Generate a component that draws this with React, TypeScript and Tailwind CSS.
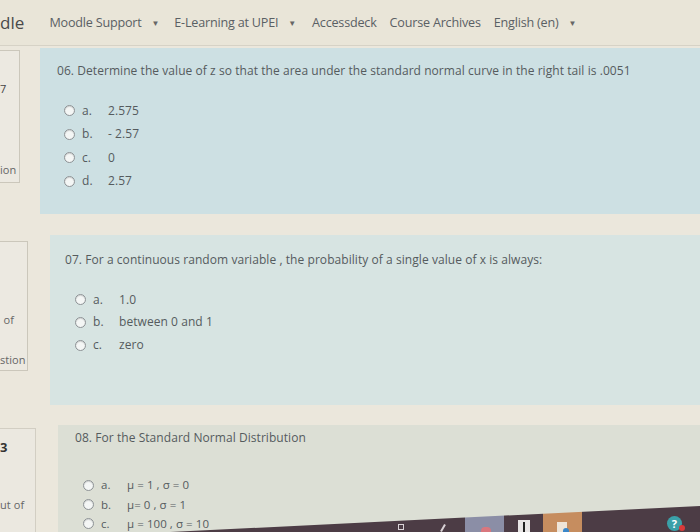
import type { ReactNode } from 'react'

const font = { fontFamily: '"Open Sans", "Noto Sans", Arial, sans-serif' }

function Caret({ className = 'ml-[10px]' }: { className?: string }) {
  return <span className={`inline-block text-[8px] leading-none text-[#666] ${className}`}>▼</span>
}

function Radio() {
  return (
    <span className="inline-block h-[11px] w-[11px] shrink-0 rounded-full border border-[#8d9295] bg-[#f4f6f5] shadow-[inset_0_1px_1px_rgba(0,0,0,0.15)]" />
  )
}

interface OptionProps {
  letter: string
  children: ReactNode
  rowClass: string
}

function Option({ letter, children, rowClass }: OptionProps) {
  return (
    <div className={`flex items-center ${rowClass}`}>
      <Radio />
      <span className="ml-[7px] w-[26px]">{letter}</span>
      <span>{children}</span>
    </div>
  )
}

export default function App() {
  return (
    <div
      style={font}
      className="relative h-[532px] w-[700px] overflow-hidden bg-[#ebe7dc] text-[12px] tracking-[0.06px] text-[#555b5e]"
    >
      {/* top navigation */}
      <div className="flex h-[46px] items-center border-b border-[#d6d2c6] bg-[#e9e5d8] pt-[1px]">
        <span className="text-[17px] text-[#4a4a4a]">dle</span>
        <div className="ml-[25px] flex items-center text-[12.6px] tracking-[-0.2px] text-[#5a6064]">
          <span>Moodle Support</span>
          <Caret />
          <span className="ml-[15px]">E-Learning at UPEI</span>
          <Caret />
          <span className="ml-[16px]">Accessdeck</span>
          <span className="ml-[13px]">Course Archives</span>
          <span className="ml-[13px]">English (en)</span>
          <Caret />
        </div>
      </div>

      {/* question 06 */}
      <div className="mt-[2px] flex items-start">
        <div className="mt-[2px] flex h-[133px] w-[20px] flex-col border-y border-r border-[#cbc7bb] bg-[#ece9e1] text-[11px] text-[#666]">
          <div className="mt-[30px] pr-[14px] text-right text-[#444]">7</div>
          <div className="mt-[64px] pr-[5px] text-right">ion</div>
        </div>
        <div className="ml-[20px] h-[166px] flex-1 bg-[#cde0e3] pl-[17px] pt-[14px]">
          <div>06. Determine the value of z so that the area under the standard normal curve in the right tail is .0051</div>
          <div className="ml-[7px] mt-[19px]">
            <Option letter="a." rowClass="h-[23.5px]">2.575</Option>
            <Option letter="b." rowClass="h-[23.5px]">- 2.57</Option>
            <Option letter="c." rowClass="h-[23.5px]">0</Option>
            <Option letter="d." rowClass="h-[23.5px]">2.57</Option>
          </div>
        </div>
      </div>

      {/* question 07 */}
      <div className="mt-[21px] flex items-start">
        <div className="mt-[6px] flex h-[130px] w-[28px] flex-col border-y border-r border-[#cbc7bb] bg-[#ece9e1] text-[11px] text-[#666]">
          <div className="mt-[70px] pr-[13px] text-right">of</div>
          <div className="mt-[23px] pr-[2px] text-right">stion</div>
        </div>
        <div className="ml-[22px] h-[170px] flex-1 bg-[#d7e4e2] pl-[15px] pt-[16px]">
          <div>07. For a continuous random variable , the probability of a single value of x is always:</div>
          <div className="ml-[10px] mt-[20px]">
            <Option letter="a." rowClass="h-[21.5px]">1.0</Option>
            <Option letter="b." rowClass="h-[23px]">between 0 and 1</Option>
            <Option letter="c." rowClass="h-[23px]">zero</Option>
          </div>
        </div>
      </div>

      {/* question 08 */}
      <div className="mt-[20px] flex items-start">
        <div className="mt-[3px] flex h-[120px] w-[36px] flex-col border-t border-r border-[#d2cec3] bg-[#ebe8e0] text-[11px] text-[#666]">
          <div className="mt-[9px] text-[13px] font-bold text-[#333]">3</div>
          <div className="mt-[39px]">ut of</div>
        </div>
        <div className="ml-[22px] h-[120px] flex-1 bg-[#dcdfd5] pl-[17px] pt-[4px]">
          <div>08. For the Standard Normal Distribution</div>
          <div className="ml-[8px] mt-[28px] text-[11.5px]">
            <Option letter="a." rowClass="h-[20px]">μ = 1 , σ = 0</Option>
            <Option letter="b." rowClass="h-[19px]">μ= 0 , σ = 1</Option>
            <Option letter="c." rowClass="h-[19px]">μ = 100 , σ = 10</Option>
          </div>
        </div>
      </div>

      {/* taskbar peeking in at the bottom of the photo */}
      <div className="absolute bottom-0 left-[170px] right-0 flex h-[26px] [clip-path:polygon(0%_100%,100%_0%,100%_100%)]">
        <div className="relative w-[295px] bg-[#4c3c45]">
          <span className="absolute bottom-[2px] left-[228px] h-[6px] w-[6px] border border-[#d9d2d6]" />
          <span className="absolute bottom-0 left-[272px] h-[8px] w-[2px] rotate-[30deg] bg-[#d9d2d6]" />
        </div>
        <div className="relative w-[39px] bg-[#8b8ea6]">
          <span className="absolute bottom-[-3px] left-[16px] h-[8px] w-[10px] rounded-full bg-[#d9777e]" />
        </div>
        <div className="relative w-[39px] bg-[#4c3c45]">
          <span className="absolute bottom-0 left-[14px] h-[12px] w-[12px] bg-[#e9e6e6]" />
          <span className="absolute bottom-0 left-[19px] h-[10px] w-[2px] bg-[#222]" />
        </div>
        <div className="relative w-[39px] bg-[#c68d5f]">
          <span className="absolute bottom-0 left-[14px] h-[10px] w-[10px] bg-[#eee4d8]" />
          <span className="absolute bottom-[-2px] left-[20px] h-[6px] w-[6px] rounded-full bg-[#3a86c8]" />
        </div>
        <div className="relative flex-1 bg-[#4c3c45]">
          <span className="absolute bottom-[1px] left-[85px] flex h-[15px] w-[15px] items-center justify-center rounded-full bg-[#3aa0a8] text-[11px] font-bold leading-none text-white">
            ?
          </span>
          <span className="absolute bottom-[1px] left-[97px] h-[6px] w-[6px] rounded-full bg-[#d83a3a]" />
        </div>
      </div>
    </div>
  )
}
